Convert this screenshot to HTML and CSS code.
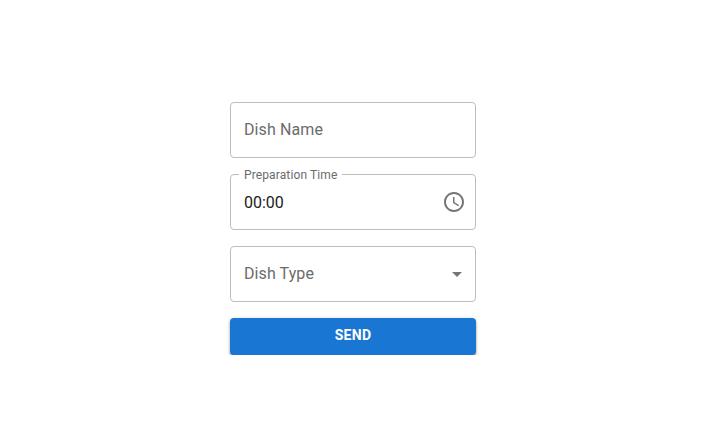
FILE: index.html
```html
<!DOCTYPE html>
<html lang="en">

<head>
    <meta charset="UTF-8" />
    <meta name="viewport" content="width=device-width, initial-scale=1.0" />
    <title>Add Dish</title>
    <link rel="stylesheet" href="styles.css">
</head>

<body>
    <div class="page">
        <form class="dish-form">
            <div class="field">
                <span class="placeholder">Dish Name</span>
            </div>

            <div class="field">
                <span class="field-label">Preparation Time</span>
                <span class="value">00:00</span>
                <svg class="clock-icon" viewBox="0 0 24 24" width="24" height="24">
                    <path d="M11.99 2C6.47 2 2 6.48 2 12s4.47 10 9.99 10C17.52 22 22 17.52 22 12S17.52 2 11.99 2zM12 20c-4.42 0-8-3.58-8-8s3.58-8 8-8 8 3.58 8 8-3.58 8-8 8z"></path>
                    <path d="M12.5 7H11v6l5.25 3.15.75-1.23-4.5-2.67z"></path>
                </svg>
            </div>

            <div class="field">
                <span class="placeholder">Dish Type</span>
                <svg class="arrow-icon" viewBox="0 0 24 24" width="24" height="24">
                    <path d="M7 10l5 5 5-5z"></path>
                </svg>
            </div>

            <button type="button" class="btn-send">Send</button>
        </form>
    </div>
</body>

</html>
```

FILE: styles.css
```css
* {
    box-sizing: border-box;
}

body {
    margin: 0;
    font-family: Roboto, "Liberation Sans", sans-serif;
    background-color: #fff;
}

.page {
    display: flex;
    justify-content: center;
    padding: 102px 18px 0 0;
}

.dish-form {
    display: flex;
    flex-direction: column;
    gap: 16px;
    width: 246px;
}

.field {
    position: relative;
    display: flex;
    justify-content: space-between;
    align-items: center;
    height: 56px;
    padding: 0 9px 0 13px;
    border: 1px solid #bdbdbd;
    border-radius: 4px;
}

.placeholder {
    padding-bottom: 2px;
    font-size: 16px;
    letter-spacing: 0.1px;
    color: #6b6b6b;
}

.value {
    font-size: 16px;
    color: #212121;
}

.field-label {
    position: absolute;
    top: -7px;
    left: 8px;
    padding: 0 5px;
    font-size: 12px;
    line-height: 14px;
    letter-spacing: 0.12px;
    color: #6b6b6b;
    background-color: #fff;
}

.clock-icon,
.arrow-icon {
    fill: #757575;
}

.arrow-icon {
    margin-right: -3px;
}

.btn-send {
    height: 37px;
    padding: 0 0 4px;
    border: none;
    border-radius: 4px;
    font-family: inherit;
    font-size: 14px;
    font-weight: 700;
    letter-spacing: 0.3px;
    text-transform: uppercase;
    color: #fff;
    background-color: #1976d2;
    box-shadow: 0 2px 2px 0 rgba(0, 0, 0, 0.3), 0 1px 4px 0 rgba(0, 0, 0, 0.2);
    cursor: pointer;
}
```
